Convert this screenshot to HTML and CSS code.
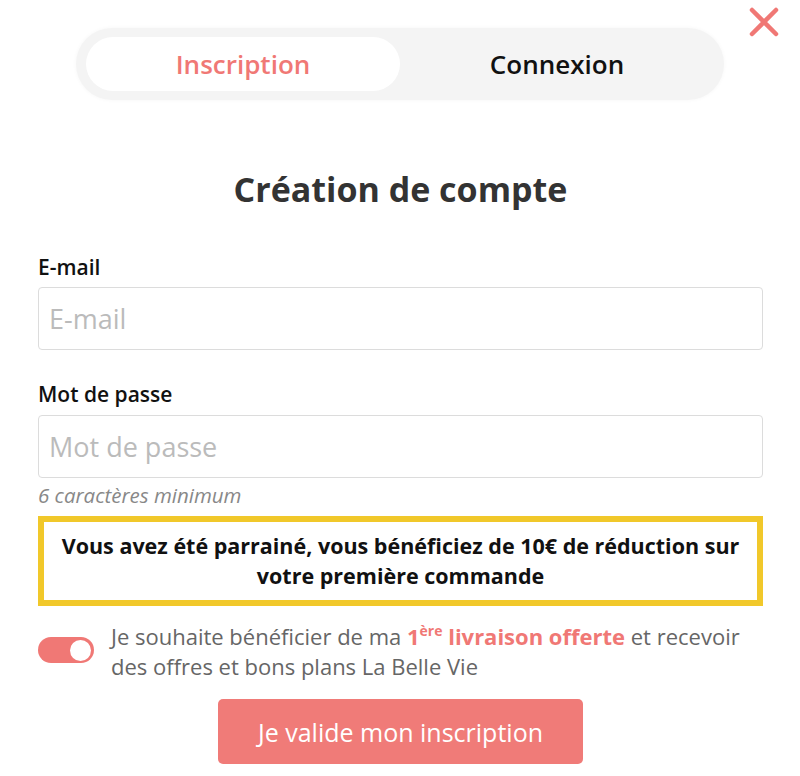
FILE: index.html
```html
<!DOCTYPE html>
<html lang="fr">
<head>
<meta charset="utf-8">
<link rel="stylesheet" href="styles.css">
</head>
<body>
<div class="modal">
  <button class="close" aria-label="Fermer">
    <svg width="30" height="30" viewBox="0 0 30 30"><path d="M3 3 L27 27 M27 3 L3 27" stroke="#f07875" stroke-width="4.5" stroke-linecap="round" fill="none"/></svg>
  </button>
  <div class="tabs">
    <div class="tab active">Inscription</div>
    <div class="tab">Connexion</div>
  </div>
  <h1 class="title">Création de compte</h1>
  <form class="form">
    <label class="label">E-mail</label>
    <div class="input">E-mail</div>
    <label class="label label-pw">Mot de passe</label>
    <div class="input">Mot de passe</div>
    <div class="hint">6 caractères minimum</div>
    <div class="referral">Vous avez été parrainé, vous bénéficiez de 10€ de réduction sur votre première commande</div>
    <div class="optin">
      <span class="toggle"><span class="knob"></span></span>
      <p class="optin-text">Je souhaite bénéficier de ma <strong>1<sup>ère</sup> livraison offerte</strong> et recevoir des offres et bons plans La Belle Vie</p>
    </div>
    <div class="actions"><span class="submit">Je valide mon inscription</span></div>
  </form>
</div>
</body>
</html>
```
FILE: styles.css
```css
html, body { margin: 0; padding: 0; background: #fff; }
body { font-family: "Open Sans", "Noto Sans", sans-serif; color: #222; width: 800px; height: 776px; overflow: hidden; }
.modal { position: relative; padding: 28px 37px 0 38px; }
.close { position: absolute; top: 7px; right: 21px; width: 30px; height: 30px; padding: 0; border: 0; background: none; }
.close svg { display: block; }
.tabs { display: flex; width: 648px; height: 72px; margin: 0 auto 0 38px; box-sizing: border-box; padding: 9px 10px; background: #f4f4f4; border-radius: 36px; box-shadow: 0 0 4px rgba(0,0,0,0.04); }
.tab { flex: 1; display: flex; align-items: center; justify-content: center; font-size: 26px; font-weight: 600; color: #111; border-radius: 28px; }
.tab.active { background: #fff; color: #f07875; flex: 0 0 314px; }
.title { margin: 68px 0 0; text-align: center; font-size: 34px; font-weight: 700; color: #333; line-height: 42px; }
.form { display: flex; flex-direction: column; margin-top: 44px; }
.label { font-size: 21px; font-weight: 600; color: #111; line-height: 26px; }
.label-pw { margin-top: 31px; }
.input { margin-top: 7px; height: 63px; box-sizing: border-box; border: 1px solid #dcdcdc; border-radius: 4px; padding: 0 10px; display: flex; align-items: center; font-size: 27px; color: #bbb; }
.label-pw + .input { margin-top: 8px; }
.hint { margin-top: 4px; font-size: 20.5px; font-style: italic; color: #888; line-height: 26px; }
.referral { margin-top: 8px; border: 6px solid #f1c82a; padding: 9px 10px; text-align: center; font-size: 21.5px; font-weight: 700; color: #111; line-height: 30px; }
.optin { display: flex; align-items: flex-start; gap: 17px; margin-top: 15px; }
.toggle { flex: 0 0 56px; height: 26px; margin-top: 16px; background: #f07875; border-radius: 13px; display: flex; justify-content: flex-end; align-items: center; padding: 0 3px; box-sizing: border-box; }
.knob { width: 21px; height: 21px; border-radius: 50%; background: #fff; }
.optin-text { margin: 0; font-size: 22px; line-height: 30px; color: #666; }
.optin-text strong { color: #f07875; font-weight: 700; }
.optin-text sup { font-size: 14px; line-height: 0; vertical-align: 9px; }
.actions { display: flex; justify-content: center; margin-top: 18px; }
.submit { width: 365px; height: 65px; display: flex; align-items: center; justify-content: center; background: #f07b78; color: #fff; font-size: 25px; border-radius: 5px; }
```
